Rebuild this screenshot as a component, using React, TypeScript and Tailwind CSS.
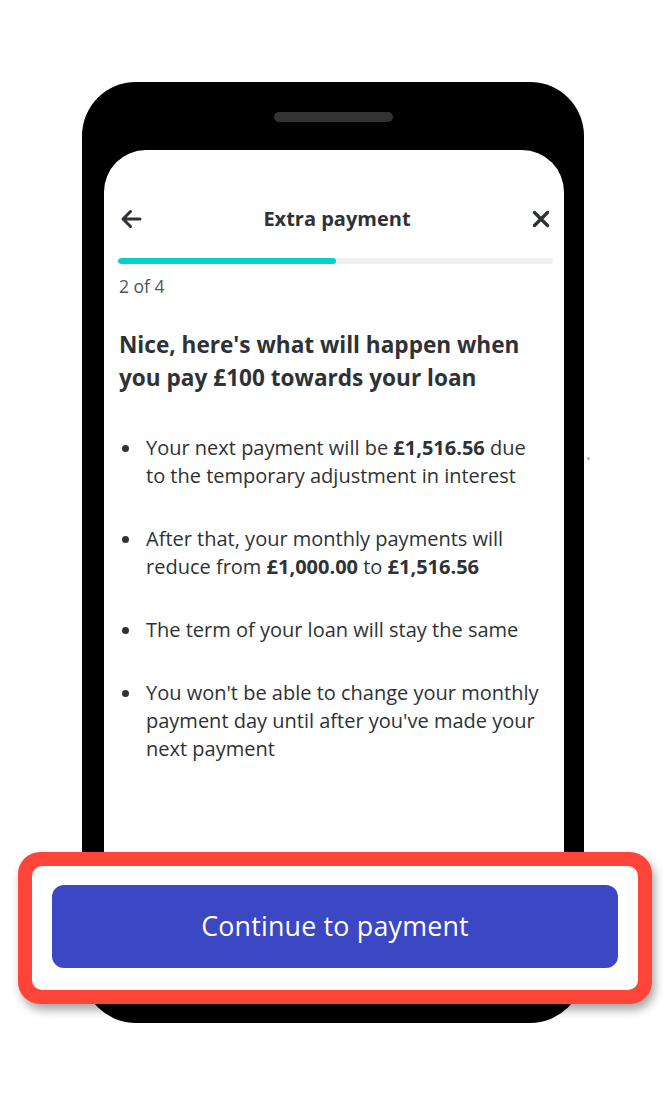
import React from 'react';

const bullets: React.ReactNode[] = [
  <>
    Your next payment will be <b className="font-bold">£1,516.56</b> due to the temporary adjustment in interest
  </>,
  <>
    After that, your monthly payments will reduce from <b className="font-bold">£1,000.00</b> to{' '}
    <b className="font-bold">£1,516.56</b>
  </>,
  <>The term of your loan will stay the same</>,
  <>You won't be able to change your monthly payment day until after you've made your next payment</>,
];

function BackArrow() {
  return (
    <svg width="22" height="22" viewBox="0 0 22 22" fill="none">
      <path
        d="M20 11H3.5M10.5 3.5L3 11l7.5 7.5"
        stroke="#2e3236"
        strokeWidth="3"
        strokeLinecap="round"
        strokeLinejoin="round"
      />
    </svg>
  );
}

function CloseIcon() {
  return (
    <svg width="18" height="18" viewBox="0 0 18 18" fill="none">
      <path d="M2.5 2.5l13 13M15.5 2.5l-13 13" stroke="#2e3236" strokeWidth="3.4" strokeLinecap="round" />
    </svg>
  );
}

export default function App() {
  return (
    <div
      className="relative w-[668px] h-[1104px] bg-white overflow-hidden"
      style={{ fontFamily: '"Open Sans", "Noto Sans", sans-serif' }}
    >
      {/* phone frame */}
      <div className="ml-[82px] mt-[82px] w-[502px] h-[941px] bg-black rounded-[54px] flex flex-col items-center">
        <div className="mt-[30px] w-[119px] h-[10px] rounded-full bg-[#333333]" />
        <div className="mt-[28px] self-start ml-[22px] w-[460px] h-[850px] bg-white rounded-[42px] pl-[14px] pr-[11px] flex flex-col text-[#2e3236]">
          <div className="mt-[56px] h-[26px] flex items-center justify-between">
            <div className="pl-[2px] flex items-center">
              <BackArrow />
            </div>
            <h1 className="text-[20px] font-bold leading-[26px]">Extra payment</h1>
            <div className="pr-[3px] flex items-center">
              <CloseIcon />
            </div>
          </div>

          <div className="mt-[26px] h-[6px] w-full rounded-full bg-[#efefef] overflow-hidden">
            <div className="h-full w-1/2 bg-[#00d4c2] rounded-full" />
          </div>

          <p className="mt-[10px] text-[17.5px] leading-[24px] text-[#50555a] pl-[1px]">2 of 4</p>

          <h2 className="mt-[30px] text-[22.6px] font-bold leading-[33px] pl-[1px] pr-[12px]">
            Nice, here's what will happen when you pay £100 towards your loan
          </h2>

          <ul className="mt-[40px] flex flex-col gap-[35px]">
            {bullets.map((b, i) => (
              <li key={i} className="flex items-start text-[20px] leading-[28px] text-[#2e3236]">
                <span className="w-[28px] shrink-0 flex justify-start pl-[4px] pt-[11px]">
                  <span className="w-[7px] h-[7px] rounded-full bg-[#2e3236]" />
                </span>
                <span className="pr-[8px]">{b}</span>
              </li>
            ))}
          </ul>
        </div>
      </div>

      {/* stray dot */}
      <div className="absolute left-[587px] top-[457px] w-[3px] h-[3px] rounded-full bg-[#b5b5b5]" />

      {/* highlighted CTA */}
      <div className="absolute left-[18px] top-[852px] w-[634px] h-[152px] rounded-[22px] bg-[#ff453a] p-[14px] shadow-[3px_6px_10px_rgba(0,0,0,0.35)]">
        <div className="w-full h-full bg-white rounded-[10px] px-[20px] pt-[19px]">
          <button className="w-full h-[83px] rounded-[12px] bg-[#3c47c4] text-white text-[26.8px] font-medium tracking-[0.2px]">
            Continue to payment
          </button>
        </div>
      </div>
    </div>
  );
}
